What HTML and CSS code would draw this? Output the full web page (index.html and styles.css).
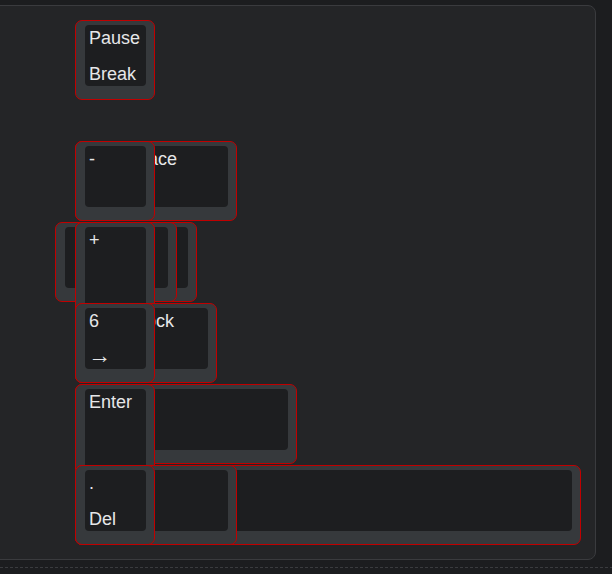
FILE: index.html
```html
<!DOCTYPE html>
<html>
<head>
<meta charset="utf-8">
<link rel="stylesheet" href="styles.css">
</head>
<body>
<div class="panel">
  <div class="board">
    <div class="key row1"><div class="cap"><span>Pause</span><span>Break</span></div></div>

    <div class="key row3 w-backspace"><div class="cap"><span class="under">Backspace</span></div></div>
    <div class="key row3"><div class="cap"><span>-</span></div></div>

    <div class="key row4 w-wide shifted"><div class="cap"></div></div>
    <div class="key row4 w-tab"><div class="cap"></div></div>
    <div class="key row4 tall"><div class="cap"><span>+</span></div></div>

    <div class="key row5 w-wide"><div class="cap"><span class="under">Caps Lock</span></div></div>
    <div class="key row5"><div class="cap"><span>6</span><span class="arrow">→</span></div></div>

    <div class="key row6 w-shift"><div class="cap"></div></div>
    <div class="key row6 tall"><div class="cap"><span>Enter</span></div></div>

    <div class="key row7 w-space"><div class="cap"></div></div>
    <div class="key row7 w-zero"><div class="cap"></div></div>
    <div class="key row7"><div class="cap"><span>.</span><span>Del</span></div></div>
  </div>
</div>
<div class="dashes"></div>
</body>
</html>
```
FILE: styles.css
```css
html, body {
  margin: 0;
  padding: 0;
}
body {
  background: #1c1d1f;
  overflow: hidden;
  width: 612px;
  height: 574px;
  font-family: "Liberation Sans", Arial, sans-serif;
}
.panel {
  box-sizing: border-box;
  margin: 5px 0 0 -20px;
  width: 616px;
  height: 555px;
  background: #242527;
  border: 1px solid #3a3b3e;
  border-radius: 8px;
  padding: 14px 0 0 94px;
}
.board {
  display: grid;
  grid-template-columns: 80px;
  grid-template-rows: 80px 39px repeat(5, 80px);
  row-gap: 1px;
  justify-items: start;
}
.key {
  box-sizing: border-box;
  grid-column: 1;
  width: 80px;
  height: 80px;
  background: #36393c;
  border: 1px solid #c10000;
  border-radius: 7px;
  padding: 4px 8px 13px 9px;
  display: flex;
}
.row1 { grid-row: 1; }
.row3 { grid-row: 3; }
.row4 { grid-row: 4; }
.row5 { grid-row: 5; }
.row6 { grid-row: 6; }
.row7 { grid-row: 7; }
.tall { grid-row-end: span 2; height: 161px; }
.w-backspace { width: 162px; }
.w-wide { width: 142px; }
.w-tab { width: 102px; }
.w-shift { width: 222px; }
.w-space { width: 506px; }
.w-zero { width: 162px; }
.shifted { margin-left: -20px; }
.cap {
  flex: 1;
  background: #1d1e20;
  border-radius: 4px;
  padding: 3px 4px 1px 4px;
  display: flex;
  flex-direction: column;
  justify-content: space-between;
  color: #e6e7e9;
  font-size: 18px;
  line-height: 21px;
  white-space: nowrap;
  overflow: hidden;
}
.arrow {
  font-size: 23px;
  line-height: 21px;
  margin: 0 0 2px -1px;
}
.dashes {
  margin-top: 7px;
  height: 1px;
  background: repeating-linear-gradient(90deg, #3a3b3e 0 3px, transparent 3px 5px);
}
```
